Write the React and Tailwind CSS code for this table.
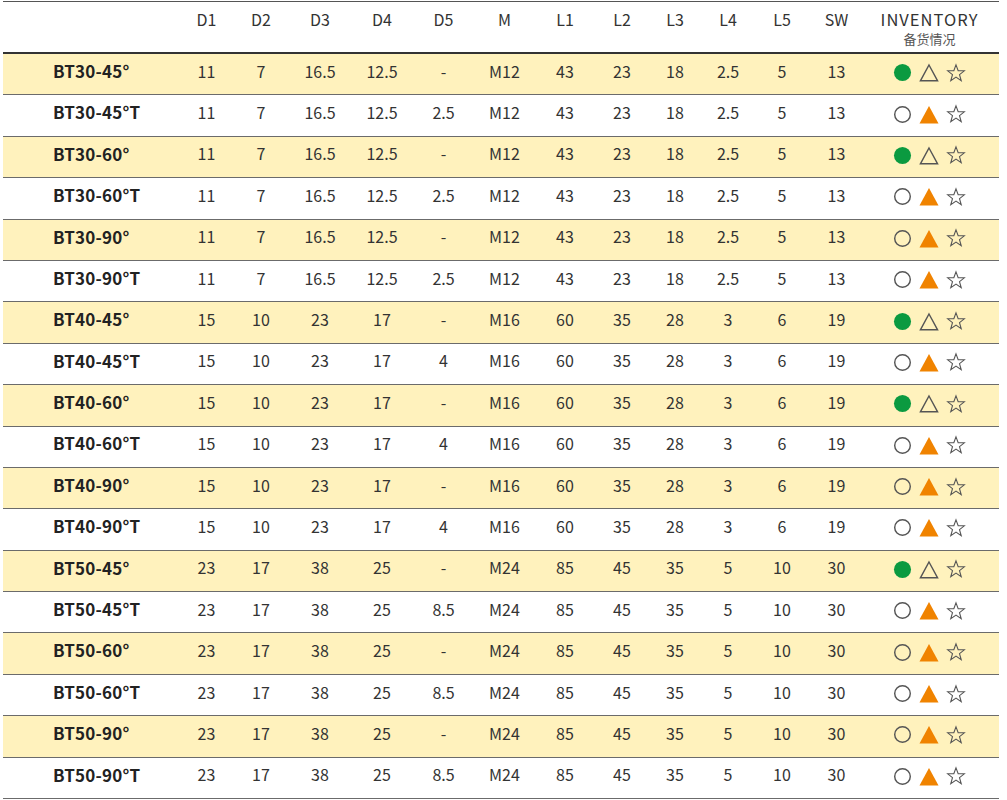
import React from 'react';

const cols = ['D1', 'D2', 'D3', 'D4', 'D5', 'M', 'L1', 'L2', 'L3', 'L4', 'L5', 'SW'];

const groups = [
  { bt: 'BT30', d: [11, 7, 16.5, 12.5], t: 2.5, m: 'M12', l: [43, 23, 18, 2.5, 5], sw: 13 },
  { bt: 'BT40', d: [15, 10, 23, 17], t: 4, m: 'M16', l: [60, 35, 28, 3, 6], sw: 19 },
  { bt: 'BT50', d: [23, 17, 38, 25], t: 8.5, m: 'M24', l: [85, 45, 35, 5, 10], sw: 30 },
];

const stockMap = {
  BT30: { '45': true, '60': true },
  BT40: { '45': true, '60': true },
  BT50: { '45': true },
};

const rows = [];
groups.forEach((g) => {
  ['45', '60', '90'].forEach((angle) => {
    [false, true].forEach((isT) => {
      rows.push({
        name: `${g.bt}-${angle}°${isT ? 'T' : ''}`,
        values: [...g.d, isT ? g.t : '-', g.m, ...g.l, g.sw],
        inStock: !isT && !!stockMap[g.bt][angle],
      });
    });
  });
});

function Circle({ filled }) {
  return (
    <svg width="19" height="19" viewBox="0 0 20 20">
      {filled ? (
        <circle cx="10" cy="10" r="9" fill="#0b9a40" />
      ) : (
        <circle cx="10" cy="10" r="8.2" fill="none" stroke="#555" strokeWidth="1.5" />
      )}
    </svg>
  );
}

function Triangle({ filled }) {
  return (
    <svg width="20" height="19" viewBox="0 0 20 19">
      {filled ? (
        <path d="M10 1 L19.5 18.5 L0.5 18.5 Z" fill="#f08300" />
      ) : (
        <path d="M10 2 L18.6 17.8 L1.4 17.8 Z" fill="none" stroke="#555" strokeWidth="1.4" />
      )}
    </svg>
  );
}

function Star() {
  return (
    <svg width="20" height="20" viewBox="0 0 24 24">
      <path
        d="M12 2.2 L14.6 9.2 L22 9.4 L16.2 14 L18.3 21.3 L12 17 L5.7 21.3 L7.8 14 L2 9.4 L9.4 9.2 Z"
        fill="none"
        stroke="#555"
        strokeWidth="1.3"
      />
    </svg>
  );
}

const grid = 'grid grid-cols-[177px_53px_56px_62px_62px_61px_61px_60px_54px_52px_54px_54px_55px_135px]';

export default function App() {
  return (
    <div
      className="w-[1007px] h-[800px] overflow-hidden bg-white pl-[3px] pt-[1px] text-[#333]"
      style={{ fontFamily: '"Noto Sans CJK SC", "Noto Sans", sans-serif' }}
    >
      <div className="w-[996px] border-t border-[#555]">
        <div className={`${grid} h-[52px] border-b-2 border-[#333]`}>
          <div />
          {cols.map((c) => (
            <div key={c} className="pt-[5px] text-center text-[16px] leading-[24px]">
              {c}
            </div>
          ))}
          <div className="flex flex-col items-center pt-[5px] pr-[4px]">
            <span className="text-[16.5px] leading-[24px] tracking-[1px]">INVENTORY</span>
            <span className="text-[13px] leading-[16px] text-[#555]">备货情况</span>
          </div>
        </div>
        {rows.map((r, i) => (
          <div
            key={r.name}
            className={`${grid} h-[41.4px] items-center border-b border-[#6b6b6b] ${i % 2 === 0 ? 'bg-[#fff2bd]' : 'bg-white'}`}
          >
            <div className="pl-[50px] pb-[7px] text-[17px] font-bold tracking-[0.2px] text-[#222]">{r.name}</div>
            {r.values.map((v, j) => (
              <div key={j} className="pb-[7px] text-center text-[16px]">
                {v}
              </div>
            ))}
            <div className="flex items-center justify-center gap-[7px] pr-[4px] pb-[3px]">
              <Circle filled={r.inStock} />
              <Triangle filled={!r.inStock} />
              <Star />
            </div>
          </div>
        ))}
      </div>
    </div>
  );
}
